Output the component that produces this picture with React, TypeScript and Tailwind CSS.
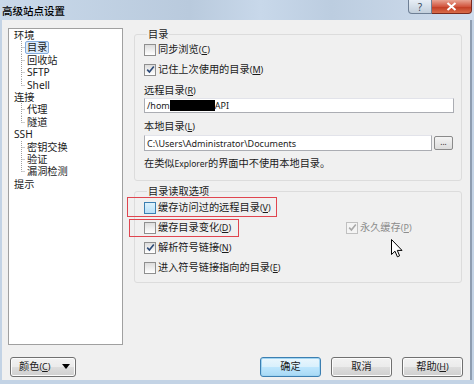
import React from 'react'

const treeChild = (label: string, last = false, selected = false) => (
  <div key={label} className="flex items-center h-[12.4px]">
    <svg width="16" height="12.4" className="shrink-0">
      <line x1="12.5" y1="0" x2="12.5" y2={last ? 6.5 : 12.4} stroke="#a0a0a0" strokeDasharray="1 1" />
      <line x1="12.5" y1="6.5" x2="16" y2="6.5" stroke="#a0a0a0" strokeDasharray="1 1" />
    </svg>
    <span
      className={
        selected
          ? 'px-[1px] h-[12.4px] leading-[10.4px] border border-[#84acdd] bg-[#dcebfc] rounded-[2px]'
          : 'px-[1px] h-[12.4px] leading-[10.4px] border border-transparent'
      }
    >
      {label}
    </span>
  </div>
)

const treeRoot = (label: string) => (
  <div key={label} className="h-[12.4px] leading-[12.4px] pl-[5px]">
    {label}
  </div>
)

function Checkbox({ checked = false, disabled = false, hover = false }) {
  const box = hover
    ? 'border-[#3c7fb1] bg-[linear-gradient(#def2fc,#b8e0f9)]'
    : disabled
    ? 'border-[#c0c0c0] bg-[#f4f4f4]'
    : 'border-[#8f8f8f] bg-[linear-gradient(#dcdcdc,#ffffff)]'
  return (
    <span className={'w-[12px] h-[12px] border shrink-0 flex items-center justify-center ' + box}>
      {checked && (
        <svg width="9" height="9" viewBox="0 0 9 9">
          <path
            d="M1.2 4.6 L3.4 7 L7.8 1.4"
            fill="none"
            stroke={disabled ? '#a8a8a8' : '#2c4a78'}
            strokeWidth="1.6"
          />
        </svg>
      )}
    </span>
  )
}

function CheckRow({
  children,
  checked,
  disabled,
  hover,
}: {
  children: React.ReactNode
  checked?: boolean
  disabled?: boolean
  hover?: boolean
}) {
  return (
    <label className={'flex items-center gap-[2px] ' + (disabled ? 'text-[#8d8d8d]' : '')}>
      <Checkbox checked={checked} disabled={disabled} hover={hover} />
      <span>{children}</span>
    </label>
  )
}

const Key = ({ k }: { k: string }) => (
  <span className="text-[9px]">
    (<span className="underline">{k}</span>)
  </span>
)

function WinButton({ children, primary = false, w = 'w-[61px]' }: { children: React.ReactNode; primary?: boolean; w?: string }) {
  return (
    <div
      className={
        w +
        ' h-[20px] rounded-[3px] border flex items-center justify-center ' +
        (primary
          ? 'border-[#3c7fb1] bg-[linear-gradient(#eaf6fd_0%,#d9f0fc_50%,#bee6fd_51%,#a7d9f5_100%)] shadow-[inset_0_0_0_1px_#9fd4f2]'
          : 'border-[#707070] bg-[linear-gradient(#f2f2f2_0%,#ebebeb_50%,#dddddd_51%,#cfcfcf_100%)] shadow-[inset_0_0_0_1px_#fcfcfc]')
      }
    >
      {children}
    </div>
  )
}

export default function App() {
  return (
    <div className="w-[474px] h-[384px] bg-[#c3d3e5] flex flex-col overflow-hidden font-['Noto_Sans','Noto_Sans_CJK_SC',sans-serif] text-[10.2px] text-[#1b1b1b]">
      {/* title bar */}
      <div className="h-[20px] shrink-0 flex items-start bg-[linear-gradient(90deg,#c9d9ea_0%,#b9cadd_40%,#c8d8ea_55%,#bccde0_70%,#d0dded_100%)]">
        <span className="pl-[2px] leading-[22px] text-[10.5px] font-medium text-black">高级站点设置</span>
        <div className="ml-auto mr-[2px] flex">
          <div className="w-[24px] h-[14px] rounded-bl-[4px] border border-t-0 border-[#6e7f95] bg-[linear-gradient(#e7eef6,#c2cfdc)] flex items-center justify-center text-[10px] leading-none text-[#37475a]">
            ?
          </div>
          <div className="w-[40px] h-[14px] rounded-br-[4px] border border-t-0 border-l-0 border-[#7a2a1f] bg-[linear-gradient(#e8a493,#d2563f_50%,#c13a22_51%,#d86c4a)] flex items-center justify-center">
            <svg width="11" height="9" viewBox="0 0 11 9">
              <path d="M1.5 1 L9.5 8 M9.5 1 L1.5 8" stroke="#ffffff" strokeWidth="2" />
            </svg>
          </div>
        </div>
      </div>

      {/* client area */}
      <div className="flex-1 ml-[2px] mr-[2px] mb-[4px] bg-[#f0f0f0] border-r-2 border-[#8e9db0] flex flex-col">
        <div className="flex pt-[8px] pl-[6px]">
          {/* tree */}
          <div className="w-[115px] h-[317px] bg-white border border-[#a0a0a0] shrink-0">
            {treeRoot('环境')}
            {treeChild('目录', false, true)}
            {treeChild('回收站')}
            {treeChild('SFTP')}
            {treeChild('Shell', true)}
            {treeRoot('连接')}
            {treeChild('代理')}
            {treeChild('隧道', true)}
            {treeRoot('SSH')}
            {treeChild('密钥交换')}
            {treeChild('验证')}
            {treeChild('漏洞检测', true)}
            {treeRoot('提示')}
          </div>

          {/* options */}
          <div className="relative ml-[11px] w-[328px]">
            <fieldset className="border border-[#dcdcdc] rounded-[3px] pb-[9px] pl-[9px]">
              <legend className="ml-[3px] px-[1px] leading-[12px]">目录</legend>
              <div className="h-[20px] flex items-center">
                <CheckRow>
                  同步浏览<Key k="C" />
                </CheckRow>
              </div>
              <div className="h-[20px] flex items-center">
                <CheckRow checked>
                  记住上次使用的目录<Key k="M" />
                </CheckRow>
              </div>
              <div className="mt-[2px] h-[16px] leading-[16px]">
                远程目录<Key k="R" />
              </div>
              <div className="w-[310px] h-[15px] bg-white border border-[#abadb3] border-t-[#e2e3ea] flex items-center pl-[2px] text-[9px] leading-none">
                /hom<span className="inline-block w-[45px] h-[11px] bg-black" />API
              </div>
              <div className="mt-[5px] h-[16px] leading-[16px]">
                本地目录<Key k="L" />
              </div>
              <div className="mt-[1px] flex items-center gap-[2px]">
                <div className="w-[288px] h-[16px] bg-white border border-[#abadb3] border-t-[#e2e3ea] flex items-center pl-[2px] text-[9px] leading-none">
                  C:\Users\Administrator\Documents
                </div>
                <div className="w-[19px] h-[14px] rounded-[2px] border border-[#8a8a8a] bg-[linear-gradient(#f4f4f4,#dcdcdc)] flex items-center justify-center text-[8px] leading-none pb-[3px]">
                  ...
                </div>
              </div>
              <div className="mt-[4px] h-[16px] leading-[16px]">
                在类似<span className="text-[8.5px]">Explorer</span>的界面中不使用本地目录。
              </div>
            </fieldset>

            <fieldset className="mt-[4px] border border-[#dcdcdc] rounded-[3px] pb-[4px] pl-[9px]">
              <legend className="ml-[3px] px-[1px] leading-[12px]">目录读取选项</legend>
              <div className="mt-[1px] h-[20px] flex items-center">
                <CheckRow hover>
                  缓存访问过的远程目录<Key k="V" />
                </CheckRow>
              </div>
              <div className="h-[20px] flex items-center">
                <div className="w-[202px]">
                  <CheckRow>
                    缓存目录变化<Key k="D" />
                  </CheckRow>
                </div>
                <CheckRow checked disabled>
                  永久缓存<Key k="P" />
                </CheckRow>
              </div>
              <div className="h-[20px] flex items-center">
                <CheckRow checked>
                  解析符号链接<Key k="N" />
                </CheckRow>
              </div>
              <div className="h-[20px] flex items-center">
                <CheckRow>
                  进入符号链接指向的目录<Key k="E" />
                </CheckRow>
              </div>
            </fieldset>

            {/* red annotation boxes */}
            <div className="absolute left-[-7px] top-[169px] w-[150px] h-[20px] border border-[#e0454f]" />
            <div className="absolute left-[-5px] top-[191px] w-[110px] h-[18px] border border-[#e0454f]" />

            {/* mouse cursor */}
            <svg className="absolute left-[257px] top-[211px]" width="12" height="19" viewBox="0 0 12 19">
              <path d="M0.5 0.5 L0.5 15.5 L4 12.2 L6.4 17.8 L8.6 16.8 L6.3 11.4 L11 11.4 Z" fill="#ffffff" stroke="#000000" strokeWidth="1" />
            </svg>
          </div>
        </div>

        {/* bottom buttons */}
        <div className="mt-[12px] flex items-center pl-[8px] pr-[7px]">
          <WinButton w="w-[66px]">
            <div className="w-full flex items-center justify-between pl-[8px] pr-[5px]">
              <span>
                颜色<Key k="C" />
              </span>
              <svg width="8" height="5" viewBox="0 0 8 5">
                <path d="M0 0 L8 0 L4 5 Z" fill="#000000" />
              </svg>
            </div>
          </WinButton>
          <div className="ml-auto flex gap-[10px]">
            <WinButton primary>确定</WinButton>
            <WinButton>取消</WinButton>
            <WinButton>
              帮助<Key k="H" />
            </WinButton>
          </div>
        </div>
      </div>
    </div>
  )
}
